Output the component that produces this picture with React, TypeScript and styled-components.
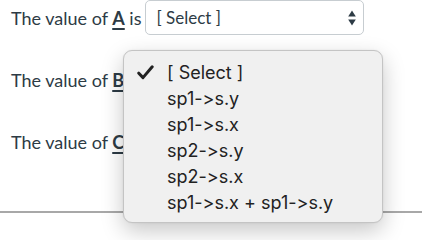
import styled, { createGlobalStyle } from "styled-components";

const GlobalStyle = createGlobalStyle`
  html, body {
    margin: 0;
    padding: 0;
    background: #ffffff;
  }
  body {
    font-family: Lato, "Open Sans", sans-serif;
    color: #2d3b45;
    overflow: hidden;
  }
`;

const Page = styled.div`
  position: relative;
  width: 422px;
  height: 240px;
  overflow: hidden;
`;

const Questions = styled.div`
  display: flex;
  flex-direction: column;
  gap: 27px;
  padding: 0 0 0 11px;
`;

const Question = styled.div`
  display: flex;
  align-items: center;
  height: 35px;
  font-size: 18px;
  white-space: nowrap;
`;

const Label = styled.span`
  margin-right: 4px;
`;

const Variable = styled.b`
  font-weight: 700;
  text-decoration: underline;
  text-decoration-thickness: 2px;
  text-underline-offset: 3px;
`;

const FakeSelect = styled.div`
  box-sizing: border-box;
  display: flex;
  align-items: center;
  justify-content: space-between;
  width: 219px;
  height: 35px;
  padding: 0 7px 0 10px;
  border: 1px solid #c7cdd1;
  border-radius: 5px;
  background: #fff;
  font-size: 17px;
  color: #2d3b45;
`;

const Divider = styled.div`
  margin-top: 52px;
  height: 2px;
  background: #a8a8a8;
`;

const Menu = styled.div`
  position: absolute;
  left: 123px;
  top: 50px;
  box-sizing: border-box;
  width: 260px;
  height: 173px;
  padding: 8px 0 7px;
  background: #f0f0f0;
  border: 1px solid #c4c4c4;
  border-radius: 9px;
  box-shadow: 0 8px 22px rgba(0, 0, 0, 0.22), 0 0 2px rgba(0, 0, 0, 0.08);
  font-family: Inter, "Liberation Sans", sans-serif;
  font-size: 18px;
  font-feature-settings: "calt" 0, "liga" 0;
  color: #222;
`;

const Option = styled.div`
  display: flex;
  align-items: center;
  height: 26px;
  padding-left: 13px;
  white-space: nowrap;
`;

const CheckSlot = styled.span`
  display: inline-flex;
  width: 30px;
  flex: none;
`;

const Arrows = () => (
  <svg width="8" height="16" viewBox="0 0 8 16">
    <path d="M4 0.5 L7.8 6.5 H0.2 Z" fill="#2d3b45" />
    <path d="M4 15.5 L7.8 9.5 H0.2 Z" fill="#2d3b45" />
  </svg>
);

const Check = () => (
  <svg width="17" height="15" viewBox="0 0 17 15">
    <path
      d="M1.8 8.2 L6 12.6 L15.2 1.8"
      fill="none"
      stroke="#222"
      strokeWidth="3"
      strokeLinecap="round"
      strokeLinejoin="round"
    />
  </svg>
);

const options = [
  "[ Select ]",
  "sp1->s.y",
  "sp1->s.x",
  "sp2->s.y",
  "sp2->s.x",
  "sp1->s.x + sp1->s.y",
];

const questions = ["A", "B", "C"];

export default function App() {
  return (
    <Page>
      <GlobalStyle />
      <Questions>
        {questions.map((q) => (
          <Question key={q}>
            <Label>
              The value of <Variable>{q}</Variable> is
            </Label>
            <FakeSelect>
              <span>[ Select ]</span>
              <Arrows />
            </FakeSelect>
          </Question>
        ))}
      </Questions>
      <Divider />
      <Menu>
        {options.map((o, i) => (
          <Option key={o}>
            <CheckSlot>{i === 0 && <Check />}</CheckSlot>
            {o}
          </Option>
        ))}
      </Menu>
    </Page>
  );
}
